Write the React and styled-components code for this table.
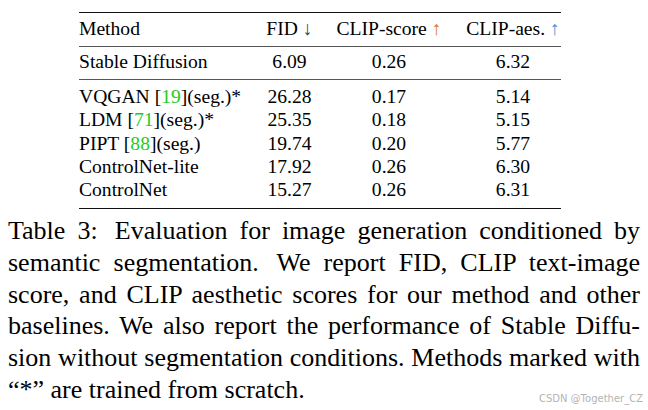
import React from "react";
import styled, { createGlobalStyle } from "styled-components";

const Global = createGlobalStyle`
  html, body { margin: 0; padding: 0; background: #fff; }
  body { width: 648px; height: 410px; overflow: hidden; }
`;

const Page = styled.div`
  position: relative;
  width: 648px;
  height: 410px;
  box-sizing: border-box;
  padding: 12px 8px 0 8px;
  font-family: "Liberation Serif", "Times New Roman", serif;
  color: #000;
`;

const Table = styled.div`
  width: 482px;
  margin-left: 71px;
  border-top: 1.5px solid #111;
  border-bottom: 1.5px solid #111;
`;

const Section = styled.div`
  padding: ${(p) => p.$pt}px 0 ${(p) => p.$pb}px 0;
  border-bottom: ${(p) => (p.$rule ? "1px solid #555" : "none")};
`;

const Row = styled.div`
  display: grid;
  grid-template-columns: 187px 47px 152px 96px;
  font-size: 19.6px;
  line-height: 23.4px;
  white-space: nowrap;
`;

const Name = styled.div`
  text-align: left;
`;

const Num = styled.div`
  justify-self: center;
  text-align: center;
`;

const Arrow = styled.span`
  color: ${(p) => p.$c};
`;

const Cite = styled.span`
  color: #22cc22;
`;

const Caption = styled.div`
  width: 632px;
  margin-top: 6px;
  font-size: 26px;
  line-height: 31.7px;
  display: flex;
  flex-direction: column;
`;

const Line = styled.div`
  text-align: ${(p) => (p.$last ? "left" : "justify")};
  text-align-last: ${(p) => (p.$last ? "left" : "justify")};
  white-space: ${(p) => (p.$last ? "nowrap" : "normal")};
`;

const Watermark = styled.div`
  position: absolute;
  right: 5px;
  bottom: 6px;
  font-family: "DejaVu Sans", "Liberation Sans", sans-serif;
  font-size: 10px;
  color: #b4b4b4;
`;

const rows = [
  { name: <>VQGAN [<Cite>19</Cite>](seg.)*</>, fid: "26.28", clip: "0.17", aes: "5.14" },
  { name: <>LDM [<Cite>71</Cite>](seg.)*</>, fid: "25.35", clip: "0.18", aes: "5.15" },
  { name: <>PIPT [<Cite>88</Cite>](seg.)</>, fid: "19.74", clip: "0.20", aes: "5.77" },
  { name: "ControlNet-lite", fid: "17.92", clip: "0.26", aes: "6.30" },
  { name: "ControlNet", fid: "15.27", clip: "0.26", aes: "6.31" },
];

const captionLines = [
  "Table 3:\u2009 Evaluation for image generation conditioned by",
  "semantic segmentation.\u2009 We report FID, CLIP text-image",
  "score, and CLIP aesthetic scores for our method and other",
  "baselines. We also report the performance of Stable Diffu-",
  "sion without segmentation conditions. Methods marked with",
  "\u201c*\u201d are trained from scratch.",
];

export default function App() {
  return (
    <>
      <Global />
      <Page>
        <Table>
          <Section $pt={4} $pb={5.5} $rule>
            <Row>
              <Name>Method</Name>
              <Num>
                FID <Arrow $c="#2a4656">↓</Arrow>
              </Num>
              <Num>
                CLIP-score <Arrow $c="#d2782e">↑</Arrow>
              </Num>
              <Num>
                CLIP-aes. <Arrow $c="#3d8fd6">↑</Arrow>
              </Num>
            </Row>
          </Section>
          <Section $pt={3.3} $pb={5.8} $rule>
            <Row>
              <Name>Stable Diffusion</Name>
              <Num>6.09</Num>
              <Num>0.26</Num>
              <Num>6.32</Num>
            </Row>
          </Section>
          <Section $pt={4.4} $pb={6.4}>
            {rows.map((r, i) => (
              <Row key={i}>
                <Name>{r.name}</Name>
                <Num>{r.fid}</Num>
                <Num>{r.clip}</Num>
                <Num>{r.aes}</Num>
              </Row>
            ))}
          </Section>
        </Table>
        <Caption>
          {captionLines.map((l, i) => (
            <Line key={i} $last={i === captionLines.length - 1}>
              {l}
            </Line>
          ))}
        </Caption>
        <Watermark>CSDN @Together_CZ</Watermark>
      </Page>
    </>
  );
}
